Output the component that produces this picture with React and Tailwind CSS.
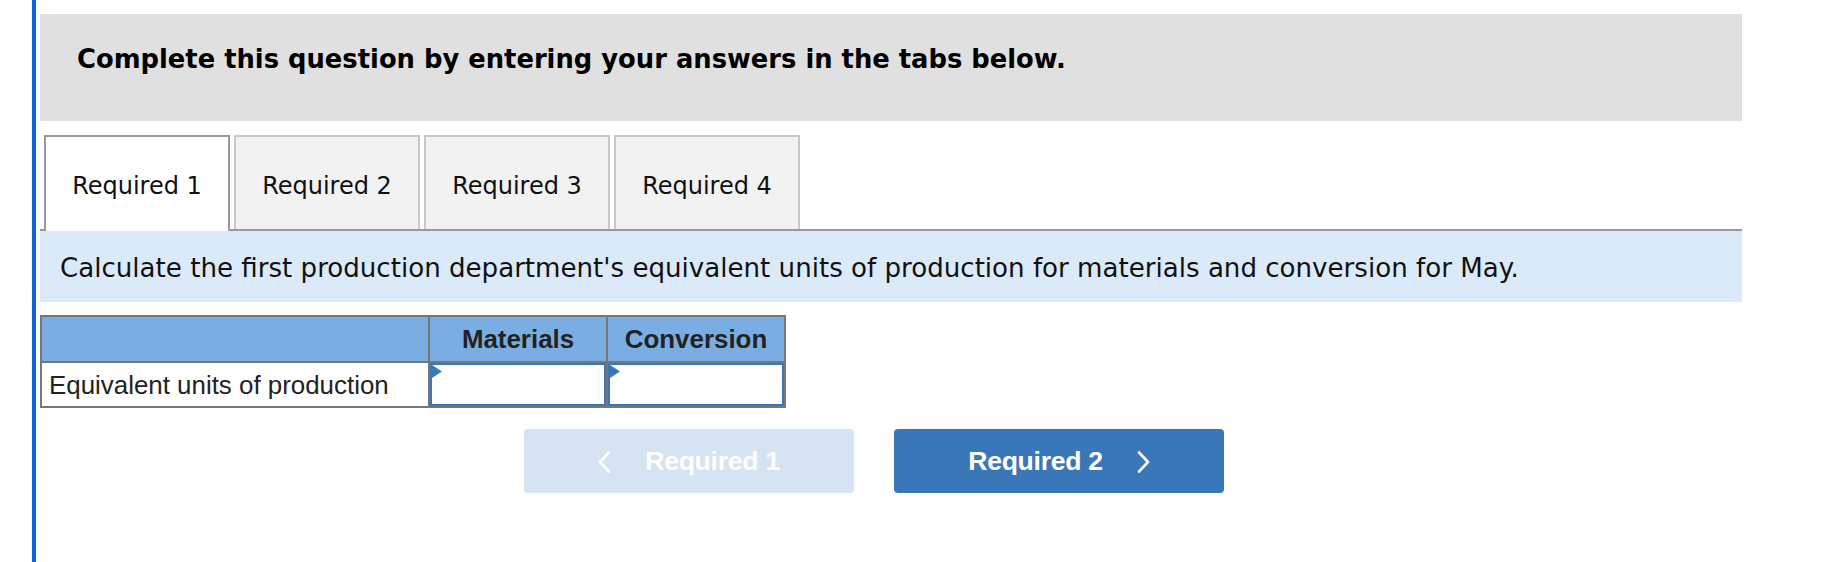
const tabs = ["Required 1", "Required 2", "Required 3", "Required 4"];

const verdana = "[font-family:'DejaVu_Sans',Verdana,sans-serif]";
const arial = "[font-family:'Liberation_Sans',Arial,sans-serif]";

const Chevron = ({ dir }) => (
  <svg width="13" height="22" viewBox="0 0 13 22" fill="none">
    <polyline
      points={dir === "left" ? "11,1.5 2,11 11,20.5" : "2,1.5 11,11 2,20.5"}
      stroke="white"
      strokeWidth="2.6"
      strokeLinecap="round"
      strokeLinejoin="round"
    />
  </svg>
);

const InputCell = () => (
  <div className="relative bg-white border-2 border-[#3a77b9] h-[43px]">
    <svg className="absolute left-0 top-0" width="10" height="13" viewBox="0 0 10 13">
      <polygon points="0,0 10,6.5 0,13" fill="#3a77b9" />
    </svg>
  </div>
);

export default function App() {
  return (
    <div className="h-[562px] bg-white pl-[32px]">
      <div className="h-full w-[1710px] border-l-4 border-[#0d62d5] pl-[4px] pt-[14px]">
        {/* question header */}
        <div className="h-[107px] bg-[#e0e0e0] pl-[37px] pt-[31px]">
          <h1 className={`${verdana} text-[25.8px] leading-[29px] font-bold text-black`}>
            Complete this question by entering your answers in the tabs below.
          </h1>
        </div>

        {/* tabs */}
        <div className="mt-[14px] flex items-end gap-[4px] border-b-2 border-[#999999] pl-[4px]">
          {tabs.map((t, i) =>
            i === 0 ? (
              <div
                key={t}
                className={`${verdana} -mb-[2px] flex h-[96px] w-[186px] items-center justify-center border-2 border-b-0 border-[#999999] bg-white pt-[3px] text-[24px] text-[#111]`}
              >
                {t}
              </div>
            ) : (
              <div
                key={t}
                className={`${verdana} flex h-[94px] w-[186px] items-center justify-center border-2 border-b-0 border-[#c8c8c8] bg-[#f2f2f2] pt-[5px] text-[24px] text-[#111]`}
              >
                {t}
              </div>
            )
          )}
        </div>

        {/* instruction */}
        <div className={`${verdana} flex h-[71px] items-center bg-[#dbeaf9] pl-[20px] pt-[4px] text-[26.1px] text-[#111]`}>
          Calculate the first production department's equivalent units of production for materials and conversion for May.
        </div>

        {/* answer table */}
        <div className={`${arial} mt-[13px] grid w-[746px] grid-cols-[386px_176px_176px] gap-[2px] bg-[#777777] p-[2px] text-[25.9px] text-[#222]`}>
          <div className="h-[44px] bg-[#7aade2]" />
          <div className="flex h-[44px] items-center justify-center bg-[#7aade2] pt-[1px] font-bold">Materials</div>
          <div className="flex h-[44px] items-center justify-center bg-[#7aade2] pt-[1px] font-bold">Conversion</div>
          <div className="flex h-[43px] items-center bg-white pl-[7px] pt-[2px]">Equivalent units of production</div>
          <InputCell />
          <InputCell />
        </div>

        {/* navigation */}
        <div className={`${arial} mt-[21px] flex gap-[40px] pl-[484px] text-[26.6px] font-bold tracking-[-0.3px] text-white`}>
          <button className="flex h-[64px] w-[330px] items-center justify-center gap-[34px] rounded-[4px] bg-[#d6e3f2] pt-[1px]">
            <Chevron dir="left" />
            <span>Required 1</span>
          </button>
          <button className="flex h-[64px] w-[330px] items-center justify-center gap-[34px] rounded-[4px] bg-[#3a77b9] pt-[1px]">
            <span>Required 2</span>
            <Chevron dir="right" />
          </button>
        </div>
      </div>
    </div>
  );
}
